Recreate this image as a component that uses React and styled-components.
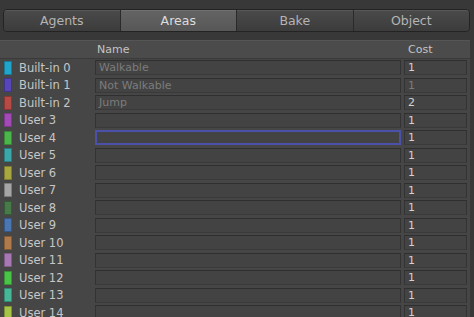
import React from "react";
import styled, { createGlobalStyle } from "styled-components";

const Global = createGlobalStyle`
  html, body { margin: 0; padding: 0; background: #383838; }
  body { font-family: "DejaVu Sans", "Liberation Sans", sans-serif; overflow: hidden; }
`;

const Page = styled.div`
  width: 474px;
  height: 317px;
  background: #383838;
  overflow: hidden;
  display: flex;
  flex-direction: column;
`;

const TabBar = styled.div`
  flex-shrink: 0;
  display: flex;
  margin: 9px 4px 0 3px;
  height: 23px;
  border: 1px solid #232323;
  border-radius: 4px;
  overflow: hidden;
  box-sizing: border-box;
`;

const Tab = styled.div`
  flex: 1;
  display: flex;
  align-items: center;
  justify-content: center;
  font-size: 12.5px;
  color: ${(p) => (p.$active ? "#dcdcdc" : "#b4b4b4")};
  background: ${(p) =>
    p.$active
      ? "linear-gradient(#646464, #575757)"
      : "linear-gradient(#4a4a4a, #3c3c3c)"};
  border-left: ${(p) => (p.$first ? "none" : "1px solid #2a2a2a")};
  box-shadow: inset 0 1px 0 rgba(255,255,255,0.08);
`;

const Panel = styled.div`
  flex-shrink: 0;
  margin-top: 8px;
  margin-right: 4px;
  background: #464646;
  border-top: 1px solid #555;
  display: flex;
  flex-direction: column;
`;

const Header = styled.div`
  display: grid;
  grid-template-columns: 95px 306px 3px 63px;
  height: 17px;
  align-items: center;
  background: #4b4b4b;
  border-bottom: 1px solid #3a3a3a;
  font-size: 11px;
  color: #c4c4c4;
`;

const HeaderCell = styled.div`
  grid-column: ${(p) => p.$col};
  padding-left: ${(p) => (p.$col === 4 ? "4px" : "2px")};
`;

const Row = styled.div`
  display: grid;
  grid-template-columns: 95px 306px 3px 63px;
  height: 17.5px;
  align-items: center;
`;

const Label = styled.div`
  display: flex;
  align-items: center;
  gap: 7px;
  padding-left: 4px;
  font-size: 11.5px;
  color: #c6c6c6;
  white-space: nowrap;
`;

const Swatch = styled.span`
  width: 8px;
  height: 14px;
  background: ${(p) => p.$color};
  border-radius: 1px;
  box-shadow: inset 0 0 0 1px rgba(0,0,0,0.25);
`;

const Field = styled.div`
  grid-column: ${(p) => p.$col};
  height: 15px;
  box-sizing: border-box;
  background: #434343;
  border-style: solid;
  border-width: ${(p) => (p.$focus ? "2px" : "1px")};
  border-color: ${(p) => (p.$focus ? "#4b50a8" : "#2f2f2f #333 #3a3a3a #333")};
  display: flex;
  align-items: center;
  padding-left: ${(p) => (p.$focus ? "2px" : "3px")};
  font-size: 11px;
  color: ${(p) => (p.$dim ? "#7c7c7c" : "#d2d2d2")};
  overflow: hidden;
  white-space: nowrap;
`;

const areas = [
  { label: "Built-in 0", color: "#20a6cc", name: "Walkable", cost: "1" },
  { label: "Built-in 1", color: "#5646b8", name: "Not Walkable", cost: "1", costDim: true },
  { label: "Built-in 2", color: "#b84a46", name: "Jump", cost: "2" },
  { label: "User 3", color: "#a44ab8", name: "", cost: "1" },
  { label: "User 4", color: "#4ab64a", name: "", cost: "1", focus: true },
  { label: "User 5", color: "#3aa8aa", name: "", cost: "1" },
  { label: "User 6", color: "#a8a63e", name: "", cost: "1" },
  { label: "User 7", color: "#a6a6a6", name: "", cost: "1" },
  { label: "User 8", color: "#467a48", name: "", cost: "1" },
  { label: "User 9", color: "#4a76b4", name: "", cost: "1" },
  { label: "User 10", color: "#b07a4a", name: "", cost: "1" },
  { label: "User 11", color: "#a878b4", name: "", cost: "1" },
  { label: "User 12", color: "#4ac446", name: "", cost: "1" },
  { label: "User 13", color: "#46b898", name: "", cost: "1" },
  { label: "User 14", color: "#a6c446", name: "", cost: "1" },
];

export default function App() {
  return (
    <Page>
      <Global />
      <TabBar>
        <Tab $first>Agents</Tab>
        <Tab $active>Areas</Tab>
        <Tab>Bake</Tab>
        <Tab>Object</Tab>
      </TabBar>
      <Panel>
        <Header>
          <HeaderCell $col={2}>Name</HeaderCell>
          <HeaderCell $col={4}>Cost</HeaderCell>
        </Header>
        {areas.map((a) => (
          <Row key={a.label}>
            <Label>
              <Swatch $color={a.color} />
              {a.label}
            </Label>
            <Field $col={2} $dim $focus={a.focus}>{a.name}</Field>
            <Field $col={4} $dim={a.costDim}>{a.cost}</Field>
          </Row>
        ))}
      </Panel>
    </Page>
  );
}
